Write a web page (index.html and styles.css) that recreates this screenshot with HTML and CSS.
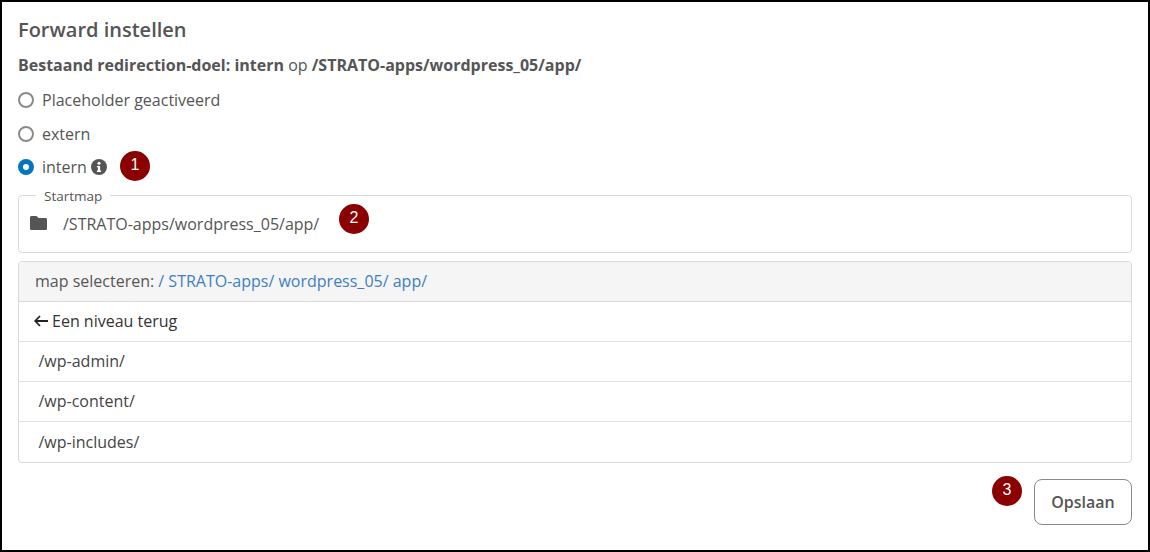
FILE: index.html
```html
<!DOCTYPE html>
<html lang="nl">
<head>
<meta charset="utf-8">
<title>Forward instellen</title>
<link rel="stylesheet" href="styles.css">
</head>
<body>
<main class="frame">
  <h1 class="title">Forward instellen</h1>
  <p class="summary"><strong>Bestaand redirection-doel: intern</strong> op <strong>/STRATO-apps/wordpress_05/app/</strong></p>
  <div class="radios">
    <label class="radio"><span class="dot"></span>Placeholder geactiveerd</label>
    <label class="radio"><span class="dot"></span>extern</label>
    <label class="radio"><span class="dot dot-on"></span>intern
      <svg class="info" viewBox="0 0 16 16" aria-hidden="true"><circle cx="8" cy="8" r="8" fill="#555"/><circle cx="8" cy="4.3" r="1.5" fill="#fff"/><path d="M5.9 6.9h3.2v4.6h1v1.4H5.9v-1.4h1V8.3h-1z" fill="#fff"/></svg>
    </label>
  </div>
  <fieldset class="start">
    <legend class="start-legend">Startmap</legend>
    <svg class="folder" viewBox="0 0 17 14" aria-hidden="true"><path d="M1.6 0h4.9l2 2h6.9c.9 0 1.6.7 1.6 1.6v8.8c0 .9-.7 1.6-1.6 1.6H1.6C.7 14 0 13.3 0 12.4V1.6C0 .7.7 0 1.6 0z" fill="#555"/></svg>
    <span>/STRATO-apps/wordpress_05/app/</span>
  </fieldset>
  <section class="browser">
    <header class="browser-head">map selecteren: <a>/ STRATO-apps/</a> <a>wordpress_05/</a> <a>app/</a></header>
    <div class="row row-back">
      <svg class="arrow" viewBox="0 0 14 12" aria-hidden="true"><path d="M6 1 1.2 6 6 11M1.5 6H14" fill="none" stroke="#222" stroke-width="1.8"/></svg>
      Een niveau terug
    </div>
    <div class="row row-dir">/wp-admin/</div>
    <div class="row row-dir">/wp-content/</div>
    <div class="row row-dir">/wp-includes/</div>
  </section>
  <footer class="actions"><button class="save" type="button">Opslaan</button></footer>
  <span class="badge badge-1">1</span>
  <span class="badge badge-2">2</span>
  <span class="badge badge-3">3</span>
</main>
</body>
</html>
```
FILE: styles.css
```css
* { box-sizing: border-box; }
html, body { margin: 0; height: 100%; }
body {
  font-family: "Open Sans", "Liberation Sans", sans-serif;
  font-size: 16px;
  color: #555;
  background: #fff;
}
.frame {
  position: relative;
  width: 1150px;
  height: 552px;
  border: 2px solid #000;
  padding: 14px 16px 0;
  overflow: hidden;
}
.title {
  margin: 0;
  font-size: 20px;
  line-height: 28px;
  font-weight: 600;
  color: #555;
}
.summary {
  margin: 10px 0 0;
  line-height: 22px;
}
.summary strong { font-weight: 700; }
.radios {
  margin-top: 7.5px;
  display: flex;
  flex-direction: column;
}
.radio {
  display: flex;
  align-items: center;
  height: 33.5px;
}
.dot {
  width: 16px;
  height: 16px;
  margin-right: 8px;
  border: 2px solid #8a8a8a;
  border-radius: 50%;
  background: #fff;
  flex: none;
}
.dot-on {
  border: 5px solid #0476bd;
}
.info {
  width: 16px;
  height: 16px;
  margin-left: 4px;
}
.start {
  margin: 3.5px 0 0;
  padding: 0 0 0 11px;
  min-width: 0;
  height: 65px;
  border: 1px solid #d9d9d9;
  border-radius: 4px;
  display: flex;
  align-items: flex-start;
}
.start-legend {
  margin-left: 6px;
  padding: 0 8px;
  font-size: 13.5px;
  line-height: 16px;
}
.start > span { padding-top: 9px; line-height: 22px; }
.folder {
  width: 17px;
  height: 14px;
  margin: 12px 16px 0 0;
  flex: none;
}
.browser {
  margin-top: 8px;
  border: 1px solid #d9d9d9;
  border-radius: 4px;
}
.browser-head {
  height: 40px;
  padding: 0 16px;
  line-height: 38px;
  background: #f5f5f5;
  border-bottom: 1px solid #d9d9d9;
  border-radius: 3px 3px 0 0;
}
.browser-head a { color: #3f7fc1; }
.row {
  height: 40.2px;
  display: flex;
  align-items: center;
  color: #333;
  border-bottom: 1px solid #e0e0e0;
}
.row:last-child { border-bottom: 0; }
.row-back { padding-left: 15px; }
.row-dir { padding-left: 19.5px; color: #444; }
.arrow {
  width: 14px;
  height: 12px;
  margin-right: 4px;
}
.actions {
  display: flex;
  justify-content: flex-end;
  margin-top: 16px;
}
.save {
  width: 98px;
  height: 46px;
  border: 1px solid #8a8a8a;
  border-radius: 8px;
  background: #fff;
  color: #555;
  font: 600 16px "Open Sans", "Liberation Sans", sans-serif;
}
.badge {
  position: absolute;
  width: 30px;
  height: 30px;
  border-radius: 50%;
  background: #8b0000;
  color: #fff;
  font-family: "Liberation Sans", sans-serif;
  font-size: 16px;
  line-height: 28px;
  text-align: center;
}
.badge-1 { left: 118px; top: 149px; }
.badge-2 { left: 337px; top: 201.5px; }
.badge-3 { left: 990px; top: 473.5px; }
```
